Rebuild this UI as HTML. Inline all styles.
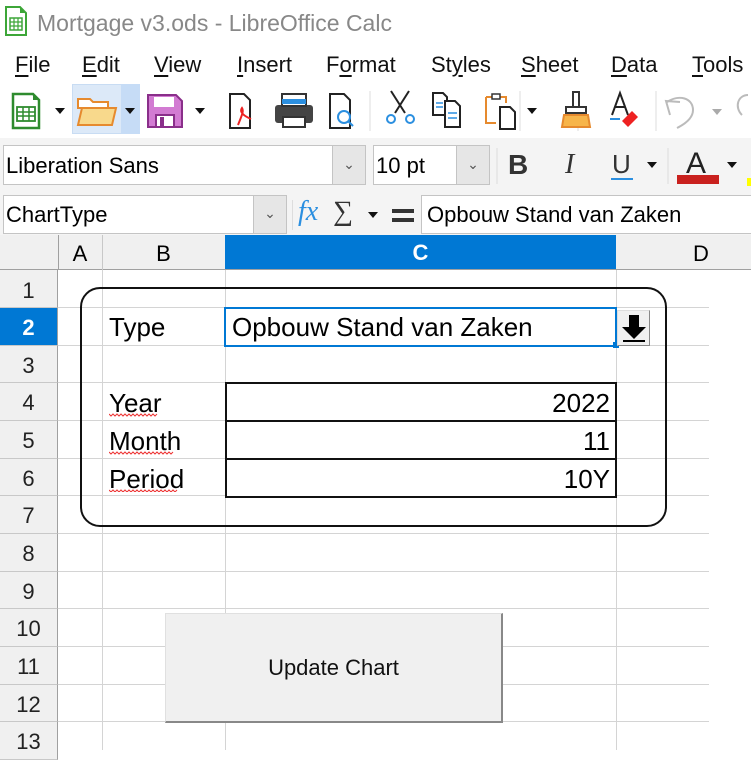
<!DOCTYPE html>
<html><head><meta charset="utf-8"><style>
*{margin:0;padding:0;box-sizing:border-box}
body{width:751px;height:750px;overflow:hidden;background:#fff;font-family:"Liberation Sans",sans-serif;position:relative;color:#000}
.a{position:absolute}
.menu span{position:absolute;top:52px;font-size:22px;color:#111}
.menu u{text-decoration:underline;text-underline-offset:3px}
.rh{position:absolute;left:0;width:58px;background:#f0f0f0;border-bottom:1px solid #c8c8c8;border-right:1px solid #a0a0a0;text-align:center;font-size:22px;color:#222}
.hl{position:absolute;left:58px;width:651px;height:1px;background:#d4d4d4}
.vl{position:absolute;top:270px;height:480px;width:1px;background:#d4d4d4}
.cell{position:absolute;font-size:26px}
</style></head><body>
<div class="a" style="left:0;top:0;width:751px;height:48px;background:#fff"></div>
<svg class="a" style="left:5px;top:6px" width="22" height="30" viewBox="0 0 22 30"><path d="M1 1h14l6 6v22H1z" fill="#fff" stroke="#3da638" stroke-width="2"/><path d="M15 1v6h6" fill="#3da638"/><rect x="5" y="12" width="12" height="12" fill="none" stroke="#3da638" stroke-width="1.5"/><path d="M5 16h12M5 20h12M9 12v12M13 12v12" stroke="#3da638" stroke-width="1.2"/></svg>
<div class="a" style="left:37px;top:10px;font-size:23px;color:#888">Mortgage v3.ods - LibreOffice Calc</div>
<div class="menu">
<span style="left:15px"><u>F</u>ile</span>
<span style="left:82px"><u>E</u>dit</span>
<span style="left:154px"><u>V</u>iew</span>
<span style="left:237px"><u>I</u>nsert</span>
<span style="left:326px">F<u>o</u>rmat</span>
<span style="left:431px">St<u>y</u>les</span>
<span style="left:521px"><u>S</u>heet</span>
<span style="left:611px"><u>D</u>ata</span>
<span style="left:692px"><u>T</u>ools</span>
</div>
<div class="a" style="left:72px;top:84px;width:68px;height:50px;background:#dce9f8;border:1px solid #c8dcf3"></div>
<div class="a" style="left:121px;top:84px;width:19px;height:50px;background:#c6dcf6"></div>
<svg class="a" style="left:0;top:85px" width="751" height="52" viewBox="0 0 751 52">
<g fill="#111"><path d="M55 23h10l-5 6z"/><path d="M125 23h10l-5 6z"/><path d="M195 23h10l-5 6z"/><path d="M527 23h10l-5 6z"/></g>
<path d="M13 9h20l6 6v28H13z" fill="#fff" stroke="#2e8b2e" stroke-width="2.5"/><path d="M33 9l6 6h-6z" fill="#2e8b2e"/><rect x="17" y="22" width="18" height="14" fill="none" stroke="#2e8b2e" stroke-width="1.8"/><path d="M17 27h18M17 31h18M23 22v14M29 22v14" stroke="#2e8b2e" stroke-width="1.5"/>
<path d="M78 14h12l3 3h15v6H78z" fill="#fff" stroke="#e68a2e" stroke-width="2"/><path d="M78 40l4-17h34l-4 17z" fill="#f8d98c" stroke="#e68a2e" stroke-width="2"/>
<path d="M148 10h28l6 6v26h-34z" fill="#d27bd2" stroke="#8a2f8a" stroke-width="2"/><rect x="154" y="12" width="20" height="10" fill="#fff"/><rect x="156" y="30" width="18" height="12" fill="#fff" stroke="#8a2f8a" stroke-width="2"/><rect x="160" y="32" width="4" height="9" fill="#8a2f8a"/>
<path d="M230 9h14l6 6v28h-20z" fill="#fff" stroke="#222" stroke-width="2"/><path d="M238 40c4-10 6-14 4-17-3 4 2 8 9 11" fill="none" stroke="#e22" stroke-width="2"/>
<rect x="275" y="20" width="38" height="18" rx="3" fill="#444"/><rect x="282" y="9" width="24" height="12" fill="#fff" stroke="#333" stroke-width="2"/><rect x="282" y="14" width="24" height="5" fill="#2b8fe0"/><rect x="283" y="32" width="22" height="10" fill="#fff" stroke="#333" stroke-width="2"/>
<path d="M330 9h14l6 6v28h-20z" fill="#fff" stroke="#222" stroke-width="2"/><circle cx="344" cy="32" r="6" fill="none" stroke="#2b8fe0" stroke-width="2"/><path d="M348 36l5 5" stroke="#2b8fe0" stroke-width="2"/>
<path d="M370 6v40M520 6v40M578 6v40M656 6v40" stroke="#ddd"/>
<path d="M391 6l14 22M409 6l-14 22" stroke="#222" stroke-width="2"/><circle cx="391" cy="34" r="4" fill="none" stroke="#2b8fe0" stroke-width="2"/><circle cx="410" cy="34" r="4" fill="none" stroke="#2b8fe0" stroke-width="2"/>
<path d="M433 8h10l4 4v18h-14z" fill="#fff" stroke="#222" stroke-width="2"/><path d="M445 16h10l5 5v21h-15z" fill="#fff" stroke="#222" stroke-width="2"/><path d="M436 18h7M436 22h7M448 28h9M448 33h9" stroke="#2b8fe0" stroke-width="1.5"/>
<path d="M486 12h20v6M486 12v26h10" fill="none" stroke="#e68a2e" stroke-width="2"/><rect x="492" y="9" width="8" height="5" fill="#fff" stroke="#333" stroke-width="1.5"/><path d="M500 22h10l5 5v17h-15z" fill="#fff" stroke="#222" stroke-width="2"/>
<rect x="573" y="7" width="6" height="16" fill="#fff" stroke="#333" stroke-width="2"/><path d="M566 22h20v6h-20z" fill="#fff" stroke="#333" stroke-width="2"/><path d="M564 30h24l2 12h-28z" fill="#f7b54a" stroke="#e68a2e" stroke-width="2"/>
<path d="M612 30l8-22 8 22M615 22h10" fill="none" stroke="#222" stroke-width="2"/><path d="M610 34h10" stroke="#2b8fe0" stroke-width="2"/><path d="M622 36l10-10 6 6-10 10z" fill="#e22"/>
<path d="M670 30l-4-14 14 1M667 17c12-8 26-4 26 8 0 8-8 14-16 18" fill="none" stroke="#bbb" stroke-width="2"/><path d="M712 24h10l-5 6z" fill="#aaa"/><path d="M748 10c-10 0-14 12-6 20" fill="none" stroke="#bbb" stroke-width="2"/>
</svg>
<div class="a" style="left:0;top:138px;width:751px;height:97px;background:#f4f4f4"></div>
<div class="a" style="left:3px;top:145px;width:363px;height:40px;background:#fff;border:1px solid #c4c4c4"></div>
<div class="a" style="left:332px;top:146px;width:33px;height:38px;background:#e6e6e6;border-left:1px solid #c4c4c4;color:#555;font-size:14px;text-align:center;line-height:36px">&#8964;</div>
<div class="a" style="left:6px;top:153px;font-size:22px">Liberation Sans</div>
<div class="a" style="left:373px;top:145px;width:117px;height:40px;background:#fff;border:1px solid #c4c4c4"></div>
<div class="a" style="left:456px;top:146px;width:33px;height:38px;background:#e6e6e6;border-left:1px solid #c4c4c4;color:#555;font-size:14px;text-align:center;line-height:36px">&#8964;</div>
<div class="a" style="left:376px;top:153px;font-size:22px">10 pt</div>
<div class="a" style="left:508px;top:149px;font-size:28px;font-weight:bold;color:#333">B</div>
<div class="a" style="left:565px;top:149px;font-size:28px;font-family:'Liberation Serif',serif;font-style:italic;color:#333">I</div>
<div class="a" style="left:612px;top:149px;font-size:26px;color:#333">U</div>
<div class="a" style="left:611px;top:178px;width:22px;height:2px;background:#2b8fe0"></div>
<div class="a" style="left:686px;top:147px;font-size:30px;color:#222">A</div>
<div class="a" style="left:677px;top:175px;width:42px;height:9px;background:#c9211e"></div>
<svg class="a" style="left:0;top:140px" width="751" height="50"><path d="M647 22h10l-5 6z M727 22h10l-5 6z" fill="#111"/><path d="M497 8v36M668 8v36" stroke="#ddd"/><rect x="747" y="38" width="4" height="8" fill="#ff0"/></svg>
<div class="a" style="left:3px;top:195px;width:284px;height:39px;background:#fff;border:1px solid #c4c4c4"></div>
<div class="a" style="left:253px;top:196px;width:33px;height:37px;background:#e6e6e6;border-left:1px solid #c4c4c4;color:#555;font-size:14px;text-align:center;line-height:35px">&#8964;</div>
<div class="a" style="left:6px;top:202px;font-size:22px">ChartType</div>
<div class="a" style="left:292px;top:200px;width:1px;height:30px;background:#ddd"></div>
<div class="a" style="left:298px;top:196px;font-size:28px;font-family:'Liberation Serif',serif;font-style:italic;color:#2b8fe0">fx</div>
<div class="a" style="left:333px;top:196px;font-size:28px;font-family:'Liberation Serif',serif;color:#333">&#8721;</div>
<svg class="a" style="left:365px;top:205px" width="60" height="20"><path d="M3 7h10l-5 6z" fill="#111"/><rect x="27" y="4" width="22" height="4" fill="#333"/><rect x="27" y="13" width="22" height="4" fill="#333"/></svg>
<div class="a" style="left:421px;top:195px;width:340px;height:39px;background:#fff;border:1px solid #c4c4c4"></div>
<div class="a" style="left:427px;top:202px;font-size:22px">Opbouw Stand van Zaken</div>
<div class="a" style="left:0;top:235px;width:751px;height:35px;background:#f0f0f0;border-bottom:1px solid #a0a0a0"></div>
<div class="a" style="left:58px;top:235px;width:1px;height:35px;background:#a0a0a0"></div>
<div class="a" style="left:102px;top:235px;width:1px;height:35px;background:#c8c8c8"></div>
<div class="a" style="left:225px;top:235px;width:391px;height:34px;background:#0078d4;color:#fff;font-size:22px;font-weight:bold;text-align:center;line-height:36px">C</div>
<div class="a" style="left:58px;top:241px;width:44px;text-align:center;font-size:22px">A</div>
<div class="a" style="left:102px;top:241px;width:123px;text-align:center;font-size:22px">B</div>
<div class="a" style="left:616px;top:241px;width:170px;text-align:center;font-size:22px">D</div>
<div class="rh" style="top:270px;height:38px;line-height:42px">1</div>
<div class="rh" style="top:308px;height:38px;line-height:40px;background:#0078d4;color:#fff;font-weight:bold">2</div>
<div class="rh" style="top:346px;height:37px;line-height:40px">3</div>
<div class="rh" style="top:383px;height:38px;line-height:40px">4</div>
<div class="rh" style="top:421px;height:38px;line-height:40px">5</div>
<div class="rh" style="top:459px;height:37px;line-height:40px">6</div>
<div class="rh" style="top:496px;height:38px;line-height:40px">7</div>
<div class="rh" style="top:534px;height:38px;line-height:40px">8</div>
<div class="rh" style="top:572px;height:37px;line-height:40px">9</div>
<div class="rh" style="top:609px;height:38px;line-height:40px">10</div>
<div class="rh" style="top:647px;height:38px;line-height:40px">11</div>
<div class="rh" style="top:685px;height:37px;line-height:40px">12</div>
<div class="rh" style="top:722px;height:38px;line-height:40px">13</div>
<div class="hl" style="top:307px"></div><div class="hl" style="top:345px"></div><div class="hl" style="top:382px"></div><div class="hl" style="top:420px"></div><div class="hl" style="top:458px"></div><div class="hl" style="top:495px"></div><div class="hl" style="top:533px"></div><div class="hl" style="top:571px"></div><div class="hl" style="top:608px"></div><div class="hl" style="top:646px"></div><div class="hl" style="top:684px"></div><div class="hl" style="top:721px"></div>
<div class="vl" style="left:102px"></div><div class="vl" style="left:225px"></div><div class="vl" style="left:616px"></div>
<div class="a" style="left:80px;top:287px;width:587px;height:240px;border:2px solid #111;border-radius:20px"></div>
<div class="a" style="left:224px;top:307px;width:393px;height:40px;border:2px solid #0078d4;background:#fff"></div>
<div class="a" style="left:613px;top:342px;width:6px;height:6px;background:#0078d4"></div>
<div class="cell" style="left:109px;top:312px">Type</div>
<div class="cell" style="left:232px;top:312px">Opbouw Stand van Zaken</div>
<div class="a" style="left:617px;top:310px;width:33px;height:36px;background:#f0f0f0;border:1px solid #888;border-top-color:#ddd;border-left-color:#ddd"></div>
<svg class="a" style="left:619px;top:312px" width="30" height="32"><path d="M10 3h10v12h7L15 27 3 15h7z" fill="#000"/><rect x="4" y="28" width="22" height="2" fill="#000"/></svg>
<div class="a" style="left:225px;top:382px;width:392px;height:116px;border:2px solid #111;background:#fff"></div>
<div class="a" style="left:225px;top:420px;width:392px;height:2px;background:#111"></div>
<div class="a" style="left:225px;top:458px;width:392px;height:2px;background:#111"></div>
<div class="cell" style="left:109px;top:388px">Year</div>
<div class="cell" style="left:109px;top:426px">Month</div>
<div class="cell" style="left:109px;top:464px">Period</div>
<div class="cell" style="left:400px;width:210px;text-align:right;top:388px">2022</div>
<div class="cell" style="left:400px;width:210px;text-align:right;top:426px">11</div>
<div class="cell" style="left:400px;width:210px;text-align:right;top:464px">10Y</div>
<svg class="a" style="left:109px;top:412px" width="80" height="80"><g fill="none" stroke="#e33" stroke-width="1"><path d="M0 2l2 2 2-2 2 2 2-2 2 2 2-2 2 2 2-2 2 2 2-2 2 2 2-2 2 2 2-2 2 2 2-2 2 2 2-2 2 2 2-2 2 2 2-2 2 2 2-2"/><path d="M0 40l2 2 2-2 2 2 2-2 2 2 2-2 2 2 2-2 2 2 2-2 2 2 2-2 2 2 2-2 2 2 2-2 2 2 2-2 2 2 2-2 2 2 2-2 2 2 2-2 2 2 2-2 2 2 2-2 2 2 2-2 2 2 2-2"/><path d="M0 78l2 2 2-2 2 2 2-2 2 2 2-2 2 2 2-2 2 2 2-2 2 2 2-2 2 2 2-2 2 2 2-2 2 2 2-2 2 2 2-2 2 2 2-2 2 2 2-2 2 2 2-2 2 2 2-2 2 2 2-2 2 2 2-2 2 2 2-2"/></g></svg>
<div class="a" style="left:165px;top:613px;width:338px;height:110px;background:#f0f0f0;border:1px solid #e0e0e0;border-right:2px solid #888;border-bottom:2px solid #888;font-size:22px;text-align:center;line-height:108px;color:#111">Update Chart</div>
</body></html>
